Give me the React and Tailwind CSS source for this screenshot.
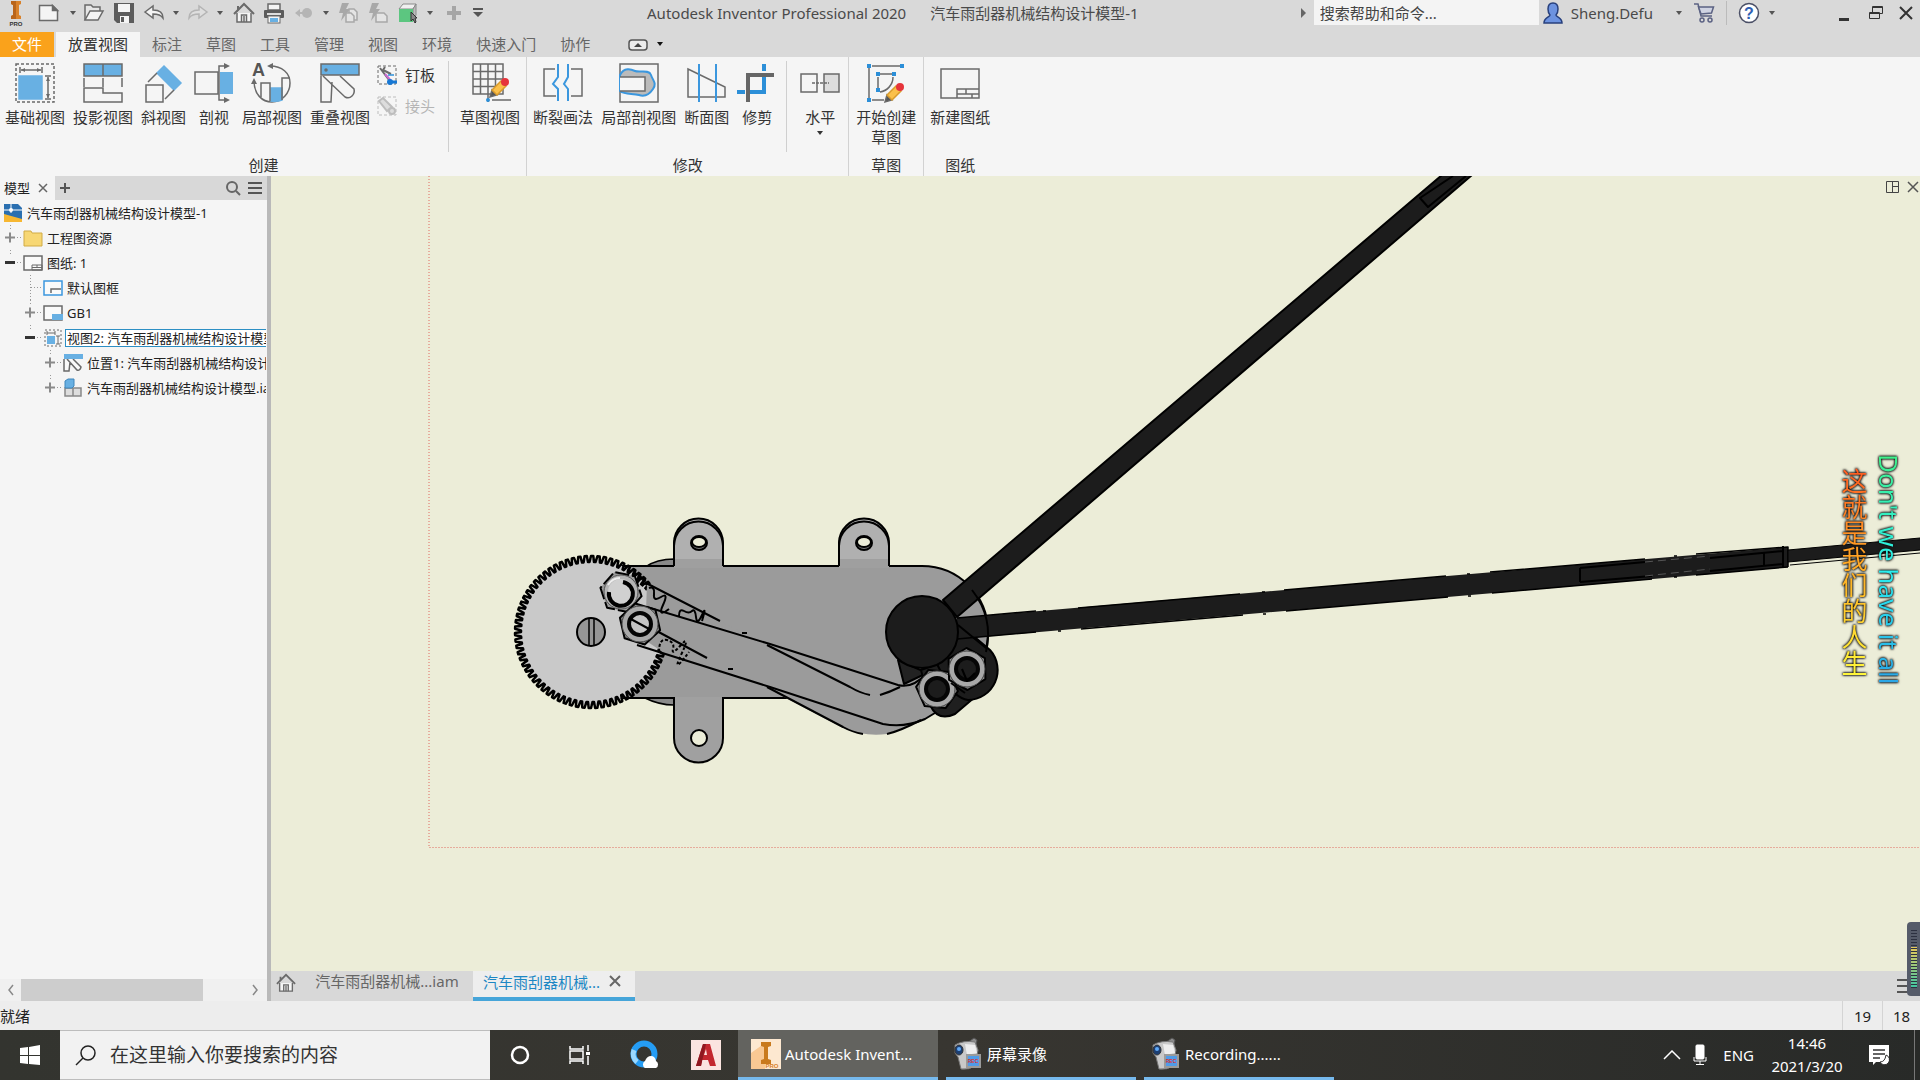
import React, { useState } from 'react';

const GRAY = '#6a6a6a';
const BLUE = '#68b0e3';
const DARK = '#1c1c1c';

function Caret({ color = '#555' }) {
  return (
    <svg width="8" height="5" viewBox="0 0 8 5">
      <path d="M1 0h6L4 4z" fill={color} />
    </svg>
  );
}

/* ---------- quick access toolbar ---------- */

const quickIcons = {
  logo: (
    <svg width="18" height="28" viewBox="0 0 18 28">
      <path d="M4 2h10v3l-2 1v10l2 1v3H4v-3l2-1V6L4 5z" fill="#d9822b" />
      <path d="M4 2h5v18H4v-3l2-1V6L4 5z" fill="#b9651b" />
      <text x="9" y="27" fontSize="6" fontWeight="bold" textAnchor="middle" fill="#333" fontFamily="Liberation Sans">PRO</text>
    </svg>
  ),
  newFile: (
    <svg width="22" height="22" viewBox="0 0 22 22" fill="#f4f4f4" stroke={GRAY} strokeWidth="1.5">
      <path d="M1.500 3.500h13l5 5v10h-18z" />
      <path d="M14.500 3.500v5h5z" fill={GRAY} />
    </svg>
  ),
  open: (
    <svg width="22" height="22" viewBox="0 0 22 22" fill="#e6e6e6" stroke={GRAY} strokeWidth="1.500">
      <path d="M2 18V3h6l2 2h7v4" />
      <path d="M2 18l5-9h13l-5 9z" fill="#f4f4f4" />
    </svg>
  ),
  save: (
    <svg width="22" height="22" viewBox="0 0 22 22">
      <path d="M1 1h20v20H4l-3-3z" fill="#5c5c5c" />
      <rect x="5" y="2" width="12" height="8" fill="#f4f4f4" />
      <rect x="7" y="14" width="9" height="7" fill="#f4f4f4" />
      <rect x="8" y="15" width="3" height="5" fill="#5c5c5c" />
    </svg>
  ),
  undo: (
    <svg width="22" height="22" viewBox="0 0 22 22" fill="#f4f4f4" stroke={GRAY} strokeWidth="1.500">
      <path d="M2 10l8-6v4c6 0 10 2 10 8c-2-3-5-4-10-4v4z" />
    </svg>
  ),
  redo: (
    <svg width="22" height="22" viewBox="0 0 22 22" fill="#dedede" stroke="#b4b4b4" strokeWidth="1.500">
      <path d="M20 10l-8-6v4c-6 0-10 2-10 8c2-3 5-4 10-4v4z" />
    </svg>
  ),
  home: <HomeIcon size={22} />,
  print: (
    <svg width="22" height="22" viewBox="0 0 22 22">
      <rect x="5" y="2" width="12" height="6" fill="#f4f4f4" stroke={GRAY} strokeWidth="1.500" />
      <rect x="1" y="8" width="20" height="8" rx="1" fill="#5c5c5c" />
      <rect x="4" y="11" width="14" height="2" fill="#ddd" />
      <rect x="5" y="14" width="12" height="7" fill="#f4f4f4" stroke={GRAY} />
      <rect x="7" y="16" width="8" height="4" fill={BLUE} />
    </svg>
  ),
  back: (
    <svg width="20" height="16" viewBox="0 0 20 16" fill="#b5b5b5">
      <path d="M1 8l5-4v3h3v2H6v3z" />
      <circle cx="13" cy="8" r="5" />
    </svg>
  ),
  flash: (
    <svg width="22" height="22" viewBox="0 0 22 22" fill="#e4e4e4" stroke="#a8a8a8" strokeWidth="1.500">
      <path d="M5 1h7L9 7h4L4 19l2-8H2z" fill="#a8a8a8" stroke="none" />
      <path d="M12 7h5l3 3v8h-8z" />
      <path d="M9 11h5l3 3v6H9z" />
    </svg>
  ),
  flashOne: (
    <svg width="22" height="22" viewBox="0 0 22 22" fill="#e4e4e4" stroke="#a8a8a8" strokeWidth="1.500">
      <path d="M5 1h7L9 7h4L4 19l2-8H2z" fill="#a8a8a8" stroke="none" />
      <path d="M9 11h8l3 3v6H9z" />
    </svg>
  ),
  cube: (
    <svg width="22" height="22" viewBox="0 0 22 22">
      <path d="M2 7l4-5h13l-3 5z" fill="#f0f0f0" stroke="#8a8a8a" />
      <path d="M16 7l3-5v11l-3 6z" fill="#bbb" stroke="#8a8a8a" />
      <rect x="2" y="7" width="14" height="13" fill="#5cc680" />
      <path d="M14 10v9l2-2 2 4 1-1-1-4h2z" fill="#888" stroke="#333" />
    </svg>
  ),
  plus: (
    <svg width="16" height="16" viewBox="0 0 16 16" fill="#a6a6a6">
      <path d="M6 1h4v5h5v4h-5v5H6v-5H1V6h5z" />
    </svg>
  ),
  more: (
    <svg width="10" height="10" viewBox="0 0 10 10" fill="#555">
      <path d="M0 0h10v2H0zM0 4h10L5 9z" />
    </svg>
  ),
};

function HomeIcon({ size }) {
  return (
    <svg width={size} height={size} viewBox="0 0 22 22">
      <path d="M4 11v9h14v-9" fill="#f4f4f4" stroke={GRAY} strokeWidth="1.500" />
      <path d="M1 12L11 2l10 10" fill="none" stroke={GRAY} strokeWidth="2" />
      <path d="M4 4h2v4L4 10z" fill={GRAY} />
      <path d="M8.500 20v-7h5v7M11 14v6" fill="none" stroke={GRAY} strokeWidth="1.500" />
    </svg>
  );
}

const quickItems = [
  { icon: 'logo', name: 'Inventor', width: 'w-8' },
  { icon: 'newFile', name: '新建', width: 'w-[34px]' },
  { icon: 'caret', name: '新建选项', width: 'w-3.5' },
  { icon: 'open', name: '打开', width: 'w-7' },
  { icon: 'save', name: '保存', width: 'w-8' },
  { icon: 'undo', name: '放弃', width: 'w-7' },
  { icon: 'caret', name: '放弃列表', width: 'w-4' },
  { icon: 'redo', name: '重做', width: 'w-7' },
  { icon: 'caret', name: '重做列表', width: 'w-4' },
  { icon: 'home', name: '主页', width: 'w-8' },
  { icon: 'print', name: '打印', width: 'w-7' },
  { icon: 'back', name: '返回', width: 'w-8' },
  { icon: 'caret', name: '返回选项', width: 'w-3' },
  { icon: 'flash', name: '全部更新', width: 'w-8' },
  { icon: 'flashOne', name: '更新', width: 'w-7' },
  { icon: 'cube', name: '选择', width: 'w-8' },
  { icon: 'caret', name: '选择选项', width: 'w-3' },
  { icon: 'plus', name: '添加', width: 'w-9' },
  { icon: 'more', name: '自定义', width: 'w-3' },
];

function TitleBar() {
  return (
    <header className="flex h-8 items-start bg-[#d9d9d9] text-[15px] leading-6 text-[#4a4a4a]">
      <div className="flex h-[26px] items-center">
        {quickItems.map((item) => (
          <button key={item.name} aria-label={item.name} className={`flex h-full items-center justify-center ${item.width}`}>
            {item.icon === 'caret' ? <Caret /> : quickIcons[item.icon]}
          </button>
        ))}
      </div>
      <h1 className="flex flex-1 justify-center gap-6 pt-px pl-2 whitespace-nowrap">
        <span>Autodesk Inventor Professional 2020</span>
        <span>汽车雨刮器机械结构设计模型-1</span>
      </h1>
      <div className="flex h-[26px] items-center">
        <button aria-label="展开搜索" className="flex w-5 justify-center">
          <svg width="6" height="10" viewBox="0 0 6 10"><path d="M0 0l5 5-5 5z" fill="#666" /></svg>
        </button>
        <input
          aria-label="搜索帮助和命令"
          placeholder="搜索帮助和命令..."
          className="h-[25px] w-[225px] self-start bg-[#f4f4f4] px-[6px] text-[15px] outline-none placeholder:text-[#444]"
        />
        <button className="flex items-center gap-2 pl-1">
          <svg width="20" height="22" viewBox="0 0 20 22">
            <path d="M10 1c4 0 5 3 5 6s-1 5-2 6c0 2 6 2 6 8H1c0-6 6-6 6-8-1-1-2-3-2-6s1-6 5-6z" fill="#6d93e0" stroke="#28407c" strokeWidth="1.500" />
          </svg>
          Sheng.Defu
        </button>
        <button aria-label="账户选项" className="flex w-9 justify-center pl-4"><Caret /></button>
        <button aria-label="应用商店" className="ml-1">
          <svg width="22" height="22" viewBox="0 0 22 22" fill="none" stroke="#5b6283" strokeWidth="1.500">
            <path d="M1 2h4l3 12h11" />
            <path d="M5.500 5h15l-2 6L8 12z" fill="#cfd3e2" />
            <circle cx="9" cy="18" r="2" />
            <circle cx="17" cy="18" r="2" />
          </svg>
        </button>
        <span className="mx-[11px] h-6 w-px bg-[#bbb]" />
        <button aria-label="帮助">
          <svg width="22" height="22" viewBox="0 0 22 22">
            <circle cx="11" cy="11" r="9.500" fill="#fff" stroke="#4a4f66" strokeWidth="1.500" />
            <text x="11" y="17" fontSize="16" fontWeight="bold" textAnchor="middle" fill="#2f5fb3" fontFamily="Liberation Sans">?</text>
          </svg>
        </button>
        <button aria-label="帮助选项" className="flex w-6 justify-center"><Caret /></button>
        <button aria-label="最小化" className="ml-11 flex w-8 justify-center">
          <svg width="12" height="20" viewBox="0 0 12 20"><path d="M1 15h10v3H1z" fill="#333" /></svg>
        </button>
        <button aria-label="还原" className="flex w-8 justify-center">
          <svg width="16" height="16" viewBox="0 0 16 16" fill="none" stroke="#333">
            <path d="M4.500 7V1.500h10v7H11M4 2.500h11" />
            <path d="M1.500 7.500h10v6h-10zM1 8.500h11" />
          </svg>
        </button>
        <button aria-label="关闭" className="flex w-7 justify-center">
          <svg width="14" height="14" viewBox="0 0 14 14"><path d="M1 1l12 12M13 1L1 13" stroke="#333" strokeWidth="2" /></svg>
        </button>
      </div>
    </header>
  );
}

/* ---------- ribbon ---------- */

const tabs = ['放置视图', '标注', '草图', '工具', '管理', '视图', '环境', '快速入门', '协作'];

function RibbonTabs() {
  const [active, setActive] = useState('放置视图');

  return (
    <nav className="flex h-[25px] items-stretch bg-[#d9d9d9] text-[15px] leading-5 text-[#666]">
      <button className="mr-0.5 bg-[#faa21b] px-3 pb-0.5 text-white">文件</button>
      {tabs.map((tab) => (
        <button
          key={tab}
          onClick={() => setActive(tab)}
          className={tab === active ? 'bg-[#f5f5f5] px-3 pb-0.5 text-[#333]' : 'px-3 pb-0.5'}
        >
          {tab}
        </button>
      ))}
      <button aria-label="显示选项" className="ml-[26px] flex items-center gap-2">
        <svg width="20" height="12" viewBox="0 0 20 12">
          <rect x="1" y="1" width="18" height="10" rx="3" fill="#ececec" stroke="#555" strokeWidth="1.500" />
          <path d="M6 8l4-4 4 4z" fill="#444" />
        </svg>
        <Caret color="#111" />
      </button>
    </nav>
  );
}

function Pencil({ x, y }) {
  return (
    <g transform={`translate(${x} ${y})`}>
      <path d="M0 18l2-7 5 5z" fill="#555" />
      <path d="M2 11L11 2l5 5-9 9z" fill="#fbc04a" stroke="#d99a2b" />
      <circle cx="15" cy="3" r="4" fill="#e6343b" stroke="none" />
    </g>
  );
}

const ribbonIcons = {
  base: (
    <>
      <rect x="1" y="1" width="38" height="38" strokeDasharray="3 2" />
      <rect x="4" y="13" width="23" height="23" fill={BLUE} stroke={BLUE} />
      <path d="M5 4v6M27 4v6M6 7h20M30 13h6M30 36h6M33 14v21" />
      <path d="M6 7l4-2v4zM26 7l-4-2v4zM33 14l-2 4h4zM33 35l-2-4h4z" fill={GRAY} stroke="none" />
    </>
  ),
  projected: (
    <>
      <path d="M1 1h38v12H1zM20 1v12" fill={BLUE} />
      <path d="M1 15v9M20 15v9M39 15v9" />
      <path d="M1 25h19v5h19v9H1z" />
    </>
  ),
  auxiliary: (
    <>
      <path d="M13 10l7-7 17 17-7 7z" fill={BLUE} stroke={BLUE} />
      <path d="M2 22h17v17H2zM4 19l9-9M21 36l9-9" />
    </>
  ),
  section: (
    <>
      <rect x="1" y="9" width="23" height="22" />
      <rect x="26" y="9" width="13" height="22" fill={BLUE} stroke="none" />
      <path d="M32 3h-7v34h7" />
      <path d="M30 0l6 3-6 3zM30 34l6 3-6 3z" fill={GRAY} stroke="none" />
    </>
  ),
  detail: (
    <>
      <text x="0" y="13" fontSize="18" fontWeight="bold" fill="#555" stroke="none" fontFamily="Liberation Sans">A</text>
      <path d="M18 3c12 0 20 7 20 17s-8 19-18 19S2 31 2 18" />
      <path d="M21 0l-6 3 6 3zM-1 21l3-6 3 6z" fill={GRAY} stroke="none" />
      <path d="M19 25h11v12q-5 2-11 1z" fill={BLUE} stroke={BLUE} />
      <path d="M9 34V20h9v18M30 37V15h8" />
    </>
  ),
  overlay: (
    <>
      <rect x="1" y="1" width="38" height="11" fill={BLUE} />
      <circle cx="6" cy="7" r="1" />
      <path d="M1 13v26h10l1-20M3 13l22 21q4 2 7-1t2-7L20 13" />
    </>
  ),
  draft: (
    <>
      <path d="M3 1h30v30H3zM10.500 1v30M18 1v38M25.500 1v30M3 8.500h30M3 16h30M3 23.500h30M22 37h19" />
      <Pencil x={20} y={16} />
      <circle cx="18" cy="37" r="2" fill="#2c8fd8" stroke="none" />
    </>
  ),
  breakView: (
    <>
      <path d="M12 6H1v27h12M28 6h11v27H28" />
      <path d="M15 1v13l-5 7 5 5v12M25 1v13l-4 7 4 5v12" stroke="#3b97de" strokeWidth="2" />
    </>
  ),
  breakOut: (
    <>
      <rect x="1" y="1" width="38" height="38" fill="#f5f5f5" />
      <path d="M1 12C5 4 12 6 16 8s14-2 16 4 6 8 2 14-8 8-14 6-14 0-19-4z" fill="#bbb" stroke="#3b97de" strokeWidth="2" />
      <path d="M1 14h25v14H1" fill="#f5f5f5" />
    </>
  ),
  slice: (
    <>
      <path d="M1 6l37 18v10H1z" />
      <path d="M12 1v38M29 1v38" stroke="#3b97de" strokeWidth="2" />
    </>
  ),
  crop: (
    <>
      <path d="M27 1v7M27 14v15H13M8 29H0" stroke="#2c8fd8" strokeWidth="4" />
      <path d="M37 12H11v27" stroke="#666" strokeWidth="4" />
    </>
  ),
  horizontal: (
    <>
      <path d="M17 11H1v18h16z" />
      <path d="M24 11h15v18H24z" fill="#ddd" />
      <path d="M12 20h17" strokeDasharray="3 1" />
    </>
  ),
  sketch: (
    <>
      <path d="M3 5v30M6 3h28M6 37h12M12 14v14M14 11h12M27 14c0 8-6 14-13 15" />
      <path d="M1 1h4v4H1zM34 1h4v4h-4zM1 35h4v4H1zM10 9h4v4h-4zM26 9h4v4h-4zM10 25h4v4h-4z" fill="#2c8fd8" stroke="none" />
      <Pencil x={19} y={21} />
    </>
  ),
  sheet: (
    <>
      <rect x="1" y="6" width="38" height="29" />
      <path d="M39 26H17v9M17 31h22M26 26v5M32 31v4" />
    </>
  ),
};

function RibbonButton({ icon, label, second, arrow }) {
  return (
    <button className="flex min-w-12 flex-col items-center px-1 pt-1.5 text-[15px] leading-5 whitespace-nowrap text-[#333]">
      <svg width="40" height="40" viewBox="0 0 40 40" fill="none" stroke={GRAY} strokeWidth="1.500" className="overflow-visible">
        {ribbonIcons[icon]}
      </svg>
      <span className="mt-1">{label}</span>
      {second && <span>{second}</span>}
      {arrow && <span className="mt-1"><Caret color="#333" /></span>}
    </button>
  );
}

function RibbonPanel({ title, children, last }) {
  return (
    <section className={last ? 'flex flex-col' : 'flex flex-col border-r border-[#d2d2d2]'}>
      <div className="flex flex-1 items-start">{children}</div>
      <h2 className="pb-px text-center text-[15px] leading-5 text-[#333]">{title}</h2>
    </section>
  );
}

function Divider() {
  return <span className="mx-[5px] mt-1 h-[91px] w-px bg-[#cfcfcf]" />;
}

function Ribbon() {
  return (
    <div className="flex h-[119px] bg-[#f5f5f5] pl-px">
      <RibbonPanel title="创建">
        <RibbonButton icon="base" label="基础视图" />
        <RibbonButton icon="projected" label="投影视图" />
        <RibbonButton icon="auxiliary" label="斜视图" />
        <RibbonButton icon="section" label="剖视" />
        <RibbonButton icon="detail" label="局部视图" />
        <RibbonButton icon="overlay" label="重叠视图" />
        <div className="flex flex-col gap-[11px] pt-2 pr-2 pl-[3px] text-[15px] leading-5">
          <button className="flex items-center gap-2 text-[#333]">
            <svg width="20" height="20" viewBox="0 0 20 20" fill="none" stroke={GRAY}>
              <rect x="1" y="1" width="18" height="18" strokeDasharray="3 2" />
              <path d="M3 3l9 12M8 2l-2 3 8 4" strokeWidth="2" />
              <path d="M8 9l7 8" stroke="#c86ad0" strokeWidth="2" />
              <path d="M11 10h6" stroke="#2c8fd8" strokeWidth="1.500" />
              <path d="M12 17h8" stroke="#1778d4" strokeWidth="3" />
              <circle cx="13" cy="17" r="3" fill="#1778d4" stroke="none" />
            </svg>
            钉板
          </button>
          <button disabled className="flex items-center gap-2 text-[#b5b5b5]">
            <svg width="20" height="20" viewBox="0 0 20 20" fill="#ddd" stroke="#bdbdbd">
              <rect x="1" y="1" width="18" height="18" strokeDasharray="3 2" fill="none" />
              <path d="M2 5l4-3 9 9-5 4z" strokeWidth="2" />
              <circle cx="15" cy="15" r="3" strokeWidth="2" />
            </svg>
            接头
          </button>
        </div>
        <Divider />
        <div className="px-0.5">
          <RibbonButton icon="draft" label="草图视图" />
        </div>
      </RibbonPanel>
      <RibbonPanel title="修改">
        <div className="w-0.5" />
        <RibbonButton icon="breakView" label="断裂画法" />
        <RibbonButton icon="breakOut" label="局部剖视图" />
        <RibbonButton icon="slice" label="断面图" />
        <RibbonButton icon="crop" label="修剪" />
        <Divider />
        <div className="px-1">
          <RibbonButton icon="horizontal" label="水平" arrow />
        </div>
      </RibbonPanel>
      <RibbonPanel title="草图">
        <div className="px-[3px]">
          <RibbonButton icon="sketch" label="开始创建" second="草图" />
        </div>
      </RibbonPanel>
      <RibbonPanel title="图纸" last>
        <div className="px-0.5">
          <RibbonButton icon="sheet" label="新建图纸" />
        </div>
      </RibbonPanel>
    </div>
  );
}

/* ---------- model browser ---------- */

const treeIcons = {
  drawing: (
    <>
      <path d="M1 1h14l4 4v14H1z" fill="#2a6fb0" />
      <path d="M1 11l18 5v3H1z" fill="#f7b731" />
      <path d="M1 7h18M8 1v9" stroke="#fff" />
      <circle cx="8" cy="7" r="2" fill="#fff" />
    </>
  ),
  folder: <path d="M1 3h7l1 2h10v13H1z" fill="#f7d774" stroke="#d1ab45" />,
  sheet: (
    <>
      <path d="M1 3h18v14H1z" fill="#fafafa" stroke={GRAY} strokeWidth="1.500" />
      <path d="M9 12h10v5H9zM9 14.500h10M14 12v2" fill="none" stroke={GRAY} />
    </>
  ),
  border: (
    <>
      <path d="M1 3h18v14H1z" fill="#fafafa" stroke="#3b97de" strokeWidth="1.500" />
      <path d="M8 15v-4h10" fill="none" stroke={GRAY} strokeWidth="1.500" />
    </>
  ),
  titleBlock: (
    <>
      <path d="M1 3h18v14H1z" fill="#fafafa" stroke={GRAY} strokeWidth="1.500" />
      <path d="M9 11h11v6H9z" fill={BLUE} />
    </>
  ),
  view: (
    <>
      <rect x="2" y="2" width="16" height="16" fill="none" stroke={GRAY} strokeDasharray="2 2" />
      <rect x="4" y="8" width="8" height="8" fill={BLUE} />
      <path d="M4 5h8M4 3v4M12 3v4M15 8v8M13 8h4M13 16h4" stroke={GRAY} fill="none" />
    </>
  ),
  overlay: (
    <>
      <path d="M1 6v12h5l1-9M4 6l10 11q3 1 4-3L10 6" fill="#fafafa" stroke={GRAY} strokeWidth="1.500" />
      <path d="M1 1h19v5H1z" fill={BLUE} />
    </>
  ),
  assembly: (
    <>
      <path d="M2 10h16v8H2zM10 10v8" fill="#ddd" stroke="#888" strokeWidth="1.500" />
      <path d="M2 3l3-2h6v7l-2 2H2z" fill={BLUE} stroke="#3f86bb" />
    </>
  ),
};

const tree = [
  { level: 'pl-[3px]', icon: 'drawing', text: '汽车雨刮器机械结构设计模型-1' },
  { level: 'pl-0', icon: 'folder', text: '工程图资源', sign: '+' },
  { level: 'pl-0', icon: 'sheet', text: '图纸: 1', sign: '-' },
  { level: 'pl-5', icon: 'border', text: '默认图框', sign: '|' },
  { level: 'pl-5', icon: 'titleBlock', text: 'GB1', sign: '+' },
  { level: 'pl-5', icon: 'view', text: '视图2: 汽车雨刮器机械结构设计模型', sign: '-', selected: true },
  { level: 'pl-10', icon: 'overlay', text: '位置1: 汽车雨刮器机械结构设计模型', sign: '+' },
  { level: 'pl-10', icon: 'assembly', text: '汽车雨刮器机械结构设计模型.iam', sign: '+' },
];

function TreeSign({ sign }) {
  return (
    <svg width="23" height="25" viewBox="0 0 23 25" fill="none" className="shrink-0">
      <path d="M10.500 0v5M17 12.500h6" stroke="#999" strokeDasharray="1 2" />
      {sign === '|' && <path d="M10.500 0v25M11 12.500h10" stroke="#999" strokeDasharray="1 2" />}
      {sign === '+' && <path d="M5 12.500h10M10 7.500v10" stroke="#8a8a8a" strokeWidth="2" />}
      {sign === '-' && <path d="M5 12.500h10" stroke="#333" strokeWidth="3" />}
    </svg>
  );
}

function ModelBrowser() {
  return (
    <aside className="flex w-[271px] shrink-0 flex-col border-r-4 border-[#b9b9b9] bg-[#f5f5f5] text-[13px] text-[#222]">
      <div className="flex h-6 items-center bg-[#d8d8d8]">
        <div className="flex h-full w-[55px] items-center gap-2 bg-[#f5f5f5] pl-1">
          <span className="leading-5">模型</span>
          <button aria-label="关闭面板">
            <svg width="10" height="10" viewBox="0 0 10 10"><path d="M1 1l8 8M9 1L1 9" stroke="#666" strokeWidth="1.500" /></svg>
          </button>
        </div>
        <button aria-label="添加面板" className="ml-1">
          <svg width="12" height="12" viewBox="0 0 12 12"><path d="M6 1v10M1 6h10" stroke="#555" strokeWidth="2" /></svg>
        </button>
        <button aria-label="查找" className="ml-auto">
          <svg width="16" height="16" viewBox="0 0 16 16" fill="none" stroke="#666" strokeWidth="2">
            <circle cx="7" cy="7" r="5" />
            <path d="M11 11l4 4" />
          </svg>
        </button>
        <button aria-label="菜单" className="mr-1 ml-1.5">
          <svg width="16" height="14" viewBox="0 0 16 14"><path d="M1 2h14M1 7h14M1 12h14" stroke="#555" strokeWidth="2" /></svg>
        </button>
      </div>
      <ul className="flex-1 overflow-hidden pr-px">
        {tree.map((node) => (
          <li key={node.text + node.icon} className={`flex h-[25px] items-center overflow-hidden whitespace-nowrap ${node.level}`}>
            {node.sign && <TreeSign sign={node.sign} />}
            <svg width="20" height="20" viewBox="0 0 20 20" className="shrink-0">{treeIcons[node.icon]}</svg>
            <span
              className={
                node.selected
                  ? 'ml-0.5 flex-1 overflow-hidden border border-r-0 border-[#2d8fc4] bg-white pl-px leading-4'
                  : 'ml-1 leading-5'
              }
            >
              {node.text}
            </span>
          </li>
        ))}
      </ul>
      <div className="flex h-[22px] items-center bg-[#f0f0f0]">
        <button aria-label="向左滚动" className="flex w-[21px] justify-center">
          <svg width="6" height="12" viewBox="0 0 6 12"><path d="M5 1L1 6l4 5" fill="none" stroke="#888" strokeWidth="1.500" /></svg>
        </button>
        <div className="flex h-full flex-1 items-center">
          <div className="h-full w-[82%] bg-[#cdcdcd]" />
        </div>
        <button aria-label="向右滚动" className="flex w-6 justify-center">
          <svg width="6" height="12" viewBox="0 0 6 12"><path d="M1 1l4 5-4 5" fill="none" stroke="#888" strokeWidth="1.500" /></svg>
        </button>
      </div>
    </aside>
  );
}

/* ---------- drawing sheet ---------- */

// closed outline of the gear rim, alternating between root and tip radius
function gearPath(cx, cy, inner, outer, teeth) {
  const points = [];
  for (let i = 0; i < teeth; i++) {
    const a = (i / teeth) * Math.PI * 2;
    const step = (Math.PI * 2) / teeth;
    [[0, inner], [0.25, inner], [0.5, outer], [0.85, outer]].forEach(([t, r]) => {
      points.push(`${(cx + r * Math.cos(a + t * step)).toFixed(1)} ${(cy + r * Math.sin(a + t * step)).toFixed(1)}`);
    });
  }
  return `M${points.join('L')}Z`;
}

function hexPath(cx, cy, r, turn) {
  const points = [];
  for (let i = 0; i < 6; i++) {
    const a = (i * Math.PI) / 3 + turn;
    points.push(`${(cx + r * Math.cos(a)).toFixed(1)} ${(cy + r * Math.sin(a)).toFixed(1)}`);
  }
  return `M${points.join('L')}Z`;
}

function Nut({ cx, cy, turn, core, ring = '#a9a9a9' }) {
  return (
    <g>
      <path d={hexPath(cx, cy, 21, turn)} fill="#8c8c8c" stroke="#000" strokeWidth="2" />
      <circle cx={cx} cy={cy} r="18" fill={ring} stroke="#444" strokeWidth="1" />
      <circle cx={cx} cy={cy} r="11" fill={core} stroke="#050505" strokeWidth="4" />
    </g>
  );
}

function Mechanism() {
  return (
    <svg width="100%" height="100%" className="block">
      <g transform="translate(-271 -176)" fill="none" stroke="#000" strokeWidth="2" strokeLinejoin="round">
        <path d="M429 176v671.500H2600" stroke="#e06a60" strokeWidth="1" strokeDasharray="1 2" />

        {/* base plate with mounting ears */}
        <path d="M645 567q12-8 29-8v8zM645 698q14 7 29 7v-7z" fill="#8a8a8a" strokeWidth="1.500" />
        <path d="M591 566H922a66 66 0 0 1 0 132H591z" fill="#9b9b9b" />
        <path d="M674 567V543a24.500 24.500 0 0 1 49 0V567z" fill="#b0b0b0" stroke="none" />
        <path d="M839 567V543a25 24.500 0 0 1 50 0V567z" fill="#b0b0b0" stroke="none" />
        <path d="M674 559h49v9h-49zM839 559h50v9h-50z" fill="#9f9f9f" stroke="none" />
        <path d="M674 566V543a24.500 24.500 0 0 1 49 0V566M839 566V543a25 24.500 0 0 1 50 0V566" />
        <path d="M674 546a24.500 24.500 0 0 1 49 0M839 546a25 24.500 0 0 1 50 0" />
        <path d="M674 697V738a24.500 24.500 0 0 0 49 0V697" fill="#a0a0a0" />
        <ellipse cx="699" cy="543" rx="8" ry="7" fill="#777" />
        <ellipse cx="699" cy="542" rx="7" ry="5" fill="#ecedd8" />
        <ellipse cx="864" cy="543" rx="8" ry="7" fill="#777" />
        <ellipse cx="864" cy="542" rx="7" ry="5" fill="#ecedd8" />
        <circle cx="699" cy="738" r="8" fill="#ecedd8" />

        {/* gear */}
        <circle cx="591" cy="632" r="73" fill="#c9c9c9" stroke="none" />
        <path d={gearPath(591, 632, 70, 76, 74)} strokeWidth="2.500" />
        <circle cx="591" cy="632" r="14" fill="#969696" />
        <path d="M589 619v27M594 619v27" strokeWidth="1.500" />

        {/* links */}
        <path
          d="M647 583L720 621L850 688Q862 694 872 695L900 687L925 674L960 700L920 721L887 734Q865 737 843 728L767 688L664 653L645 640Z"
          fill="#9b9b9b"
          stroke="none"
        />
        <path d="M646 583L720 621M647 607L770 644L898 685Q912 689 926 674M637 645L770 687L883 724Q905 728 925 719L958 699" />
        <path d="M627 615L707 658M767 645L850 687Q860 693 870 695M880 695Q890 692 900 687M767 687L843 727Q852 732 863 734M887 734Q900 731 921 720" />
        <path d="M649 588q6-2 5 6t7 3 2 8 6 4M679 616q0-8 5-5t8 0 4 6 6-2 0 6M742 633h5M728 669h5" />
        <path d="M659 652q0-14 8-12t6 9 8-4 0 10 8-3" strokeDasharray="3 2" />
        <path d="M627 570q16 6 20 15M630 578q8 2 16 10" strokeWidth="3" strokeDasharray="4 2" />
        <path d={hexPath(621, 592, 21, 0.2)} fill="#9a9a9a" strokeDasharray="14 3" />
        <circle cx="621" cy="592" r="17" fill="#b5b5b5" stroke="#555" strokeWidth="1" />
        <circle cx="621" cy="592" r="13" fill="#d0d0d0" stroke="none" />
        <path d="M623 582a12 12 0 1 1-14 10" strokeWidth="4" />
        <path d="M608 585a15 15 0 0 1 12-7" stroke="#eee" strokeWidth="2" />
        <Nut cx={640} cy={624} turn={0.3} core="#c4c4c4" />
        <path d="M629 618l22 12" />

        {/* crank */}
        <path d="M925 672L898 660L904 684L927 673" fill="#222" />
        <path d="M930 705Q938 722 955 714L975 697L948 660L921 670Z" fill="#1f1f1f" />
        <path d="M957 622L990 650A30 30 0 0 1 968 700Q955 698 945 680L930 650Z" fill={DARK} />
        <Nut cx={937} cy={689} turn={0.1} core={DARK} ring="#a8a8a8" />
        <Nut cx={967} cy={669} turn={0.5} core={DARK} ring="#a8a8a8" />
        <path d="M962 669l5 12 8-8M965 693l-14-10" />

        {/* wiper arms */}
        <path d="M943 600L964 582L1442 175H1472L957 617Z" fill={DARK} />
        <path d="M1453 176L1420 198L1428 207L1466 176" />
        <path d="M957 618L1540 568L1788 547V567L1540 589L957 639Z" fill={DARK} stroke="none" />
        <g strokeWidth="1.500">
          <path d="M957 618L1036 611M1043 611h3M1078 608L1240 594M1262 592h3M1284 590L1446 576M1467 574h3M1490 572L1645 559M1674 556h3M1696 554L1788 547V567" />
          <path d="M957 639L1036 632M1058 631h3M1081 629L1243 615M1263 614h3M1286 611L1448 597M1468 596h3M1492 593L1652 579M1674 577h3M1696 575L1788 567" />
        </g>
        <path d="M1580 568v14M1580 568L1645 562M1580 582L1652 576M1710 558L1783 551M1710 571L1783 564M1764 553v12M1783 546v22" />
        <path d="M1645 562L1710 556M1645 576L1710 569" stroke="#555" strokeWidth="1" strokeDasharray="8 5" />
        <path d="M1788 550L1920 538L2600 476V489L1920 550L1788 562Z" fill={DARK} strokeWidth="1" />
        <path d="M1790 565L1920 553L2600 491" strokeWidth="1" />

        <circle cx="922" cy="632" r="36" fill={DARK} />
        <path d="M972 590Q994 618 986 652M958 625L986 648" />
      </g>
    </svg>
  );
}

function Lyrics() {
  return (
    <div className="absolute top-[278px] right-4 flex items-start gap-1.5 text-[26px] whitespace-nowrap">
      <p className="mt-3.5 bg-linear-to-b from-[#ff5a22] via-[#ffae25] to-[#fff83a] bg-clip-text leading-[30px] text-transparent drop-shadow-[0_0_1px_#000] filter-[drop-shadow(0_0_1px_#000)_drop-shadow(0_0_1px_#222)] [writing-mode:vertical-rl]">
        这就是我们的人生
      </p>
      <p className="bg-linear-to-b from-[#41f087] via-[#2beeee] to-[#2ba4e6] bg-clip-text leading-[30px] text-transparent filter-[drop-shadow(0_0_1px_#000)_drop-shadow(0_0_1px_#222)] [writing-mode:vertical-rl]">
        Don't we have it all
      </p>
    </div>
  );
}

function LevelMeter() {
  return (
    <div className="absolute right-0 bottom-[5px] flex h-[74px] w-[13px] justify-center rounded-l bg-[#555b69] py-2">
      <svg width="6" height="58" viewBox="0 0 6 58" stroke="#2c3140">
        <defs>
          <linearGradient id="meter" x1="0" y1="0" x2="0" y2="1">
            <stop offset="0" stopColor="#e6c95a" />
            <stop offset="1" stopColor="#3fc4a2" />
          </linearGradient>
        </defs>
        <rect x="0" y="17" width="6" height="41" fill="url(#meter)" stroke="none" />
        <path d="M3 0v58" strokeWidth="6" strokeDasharray="1 2" />
      </svg>
    </div>
  );
}

function Workspace() {
  return (
    <main className="relative flex min-w-0 flex-1 flex-col">
      <div className="relative min-h-0 flex-1 overflow-hidden bg-[#ecedd8]">
        <Mechanism />
        <div className="absolute top-[5px] right-px flex gap-2">
          <button aria-label="还原窗口">
            <svg width="13" height="12" viewBox="0 0 13 12" fill="none" stroke="#444"><path d="M.5.500h12v11H.500zM6.500 1v10M7 5.500h5" /></svg>
          </button>
          <button aria-label="关闭窗口">
            <svg width="12" height="12" viewBox="0 0 12 12"><path d="M1 1l10 10M11 1L1 11" stroke="#555" strokeWidth="1.500" /></svg>
          </button>
        </div>
        <Lyrics />
      </div>
      <div className="flex h-[30px] items-center bg-[#d8d8d8] text-[15px] leading-5 text-[#666]">
        <button aria-label="主页" className="flex w-[34px] justify-center pr-1 pb-1.5"><HomeIcon size={20} /></button>
        <button className="flex h-full w-[168px] items-start justify-center pr-3 pl-2">汽车雨刮器机械...iam</button>
        <div className="flex h-full w-[162px] items-start gap-2 border-b-4 border-[#46a5d9] bg-[#eee] pt-px pl-2.5 text-[#1c87c4]">
          <button>汽车雨刮器机械...</button>
          <button aria-label="关闭文档" className="pt-[3px] pl-px">
            <svg width="12" height="12" viewBox="0 0 12 12"><path d="M1 1l10 10M11 1L1 11" stroke="#666" strokeWidth="2" /></svg>
          </button>
        </div>
        <button aria-label="文档列表" className="ml-auto pr-0.5">
          <svg width="22" height="16" viewBox="0 0 22 16"><path d="M1 2h20M1 8h20M1 14h20" stroke="#555" strokeWidth="2" /></svg>
        </button>
      </div>
      <LevelMeter />
    </main>
  );
}

function StatusBar() {
  return (
    <footer className="flex h-[29px] items-center bg-[#ededed] text-[15px] leading-5 text-[#222]">
      <span className="flex-1">就绪</span>
      <span className="flex h-full w-10 items-center justify-center border-l border-[#d4d4d4]">19</span>
      <span className="flex h-full w-[38px] items-center justify-center border-l border-[#d4d4d4]">18</span>
    </footer>
  );
}

/* ---------- taskbar ---------- */

function Camcorder() {
  return (
    <svg width="30" height="34" viewBox="0 0 30 34">
      <path d="M14 6l7-5 3 2-1 5-7 2z" fill="#8c8c8c" stroke="#555" />
      <path d="M2 8q8-5 20-3l3 8-3 16q-6 4-14 3l-3-12-3-4z" fill="#c9c9c9" stroke="#777" />
      <path d="M12 7l10 1 2 8-10 2z" fill="#eee" />
      <ellipse cx="6" cy="13" rx="4" ry="5" fill="#1d3f72" stroke="#333" />
      <circle cx="6" cy="12" r="2" fill="#5fa8f5" />
      <rect x="14" y="18" width="13" height="12" fill="#4f9be8" stroke="#9a9a9a" strokeWidth="2" />
      <text x="20" y="26" fontSize="5" fontWeight="bold" textAnchor="middle" fill="#d33" fontFamily="Liberation Sans">REC</text>
    </svg>
  );
}

function InventorIcon() {
  return (
    <svg width="30" height="30" viewBox="0 0 30 30">
      <rect width="30" height="30" fill="#fde8d0" />
      <path d="M0 14L14 4v26H0z" fill="#f9c893" />
      <path d="M10 3h10v4l-3 1v12l3 1v4H10v-4l3-1V8l-3-1z" fill="#c97a1d" />
      <text x="21" y="29" fontSize="6" fontWeight="bold" textAnchor="middle" fill="#d9822b" fontFamily="Liberation Sans">PRO</text>
    </svg>
  );
}

function TaskButton({ icon, label, active }) {
  return (
    <button
      className={
        active
          ? 'flex h-full w-[200px] items-center gap-1 border-b-3 border-[#76b9ed] bg-[#63635f] pl-[13px]'
          : 'ml-2 flex h-full w-[190px] items-center gap-1 border-b-3 border-[#76b9ed] pl-[7px]'
      }
    >
      {icon}
      {label}
    </button>
  );
}

function Taskbar() {
  return (
    <div className="flex h-[50px] items-center bg-linear-to-r from-[#33342f] via-[#383631] to-[#282a28] text-[15px] leading-5 whitespace-nowrap text-white">
      <button aria-label="开始" className="flex w-[60px] justify-center">
        <svg width="20" height="20" viewBox="0 0 20 20" fill="#fff">
          <path d="M0 3l8-1v8H0zM9 2l11-2v10H9zM0 11h8v8l-8-1zM9 11h11v9L9 19z" />
        </svg>
      </button>
      <label className="flex h-full w-[430px] items-center gap-3.5 border-y border-[#bdbdbd] bg-[#f2f2f2] pl-[15px]">
        <svg width="21" height="21" viewBox="0 0 21 21" fill="none" stroke="#222" strokeWidth="1.500">
          <circle cx="13" cy="8" r="7" />
          <path d="M8 13l-7 7" />
        </svg>
        <input
          aria-label="搜索"
          placeholder="在这里输入你要搜索的内容"
          className="min-w-0 flex-1 text-[19px] outline-none placeholder:text-[#333]"
        />
      </label>
      <button aria-label="Cortana" className="flex w-[60px] justify-center">
        <svg width="20" height="20" viewBox="0 0 20 20"><circle cx="10" cy="10" r="8" fill="none" stroke="#fff" strokeWidth="2.500" /></svg>
      </button>
      <button aria-label="任务视图" className="flex w-[60px] justify-center">
        <svg width="22" height="20" viewBox="0 0 22 20" fill="none" stroke="#fff" strokeWidth="1.500">
          <path d="M1 1v3h13V1M1 6h13v8H1zM1 19v-3h13v3M19 0v6M19 11v9" />
          <path d="M17 7h4v3h-4z" fill="#fff" stroke="none" />
        </svg>
      </button>
      <button aria-label="浏览器" className="flex w-[66px] justify-center pl-0.5">
        <svg width="30" height="30" viewBox="0 0 30 30">
          <circle cx="15" cy="14" r="10.500" fill="none" stroke="#259df5" strokeWidth="6" />
          <path d="M8 22a10.500 10.500 0 0 1-3-12" fill="none" stroke="#9bd8ff" strokeWidth="5" />
          <path d="M16 28a4 4 0 0 1 0-7q2-5 6-5t5 5a4 4 0 0 1 0 7z" fill="#fff" />
        </svg>
      </button>
      <button aria-label="AutoCAD" className="mr-[17px] flex w-[45px] justify-end">
        <svg width="30" height="30" viewBox="0 0 30 30">
          <rect width="30" height="30" fill="#fbe4e0" />
          <path d="M5 26L12 4h7l6 22h-6l-2-6h-6l-1 6zM13 15h3l-1-6z" fill="#c3272f" fillRule="evenodd" />
          <path d="M5 26L12 4h3l-5 22z" fill="#8f1820" />
        </svg>
      </button>
      <TaskButton icon={<InventorIcon />} label="Autodesk Invent..." active />
      <TaskButton icon={<Camcorder />} label="屏幕录像" />
      <TaskButton icon={<Camcorder />} label="Recording......" />
      <div className="ml-auto flex h-full items-center">
        <button aria-label="显示隐藏的图标">
          <svg width="18" height="10" viewBox="0 0 18 10"><path d="M1 9l8-8 8 8" fill="none" stroke="#fff" strokeWidth="1.500" /></svg>
        </button>
        <button aria-label="麦克风" className="ml-3">
          <svg width="14" height="22" viewBox="0 0 14 22" fill="none" stroke="#fff">
            <rect x="3" y="1" width="8" height="14" rx="1" fill="#fff" />
            <path d="M1 13v4h12v-4M7 17v4M3 20.500h8" />
          </svg>
        </button>
        <button className="ml-4">ENG</button>
        <button className="ml-[15px] flex w-[76px] flex-col items-center leading-[23px]">
          <span>14:46</span>
          <span>2021/3/20</span>
        </button>
        <button aria-label="通知" className="ml-6">
          <svg width="20" height="20" viewBox="0 0 20 20">
            <path d="M0 0h20v17H7l-3 3v-3H0z" fill="#fff" />
            <path d="M4 5h12M4 9h12M4 13h7" stroke="#333" strokeWidth="1.500" />
            <path d="M17 10a5 5 0 1 1-6 7q5 0 6-7z" fill="#fff" stroke="#333" />
          </svg>
        </button>
        <span className="mr-[5px] ml-[25px] h-full w-px bg-[#777]" />
      </div>
    </div>
  );
}

export default function App() {
  return (
    <div className="flex h-screen flex-col overflow-hidden font-['Noto_Sans','Noto_Sans_CJK_SC',sans-serif]">
      <TitleBar />
      <RibbonTabs />
      <Ribbon />
      <div className="flex min-h-0 flex-1">
        <ModelBrowser />
        <Workspace />
      </div>
      <StatusBar />
      <Taskbar />
    </div>
  );
}
